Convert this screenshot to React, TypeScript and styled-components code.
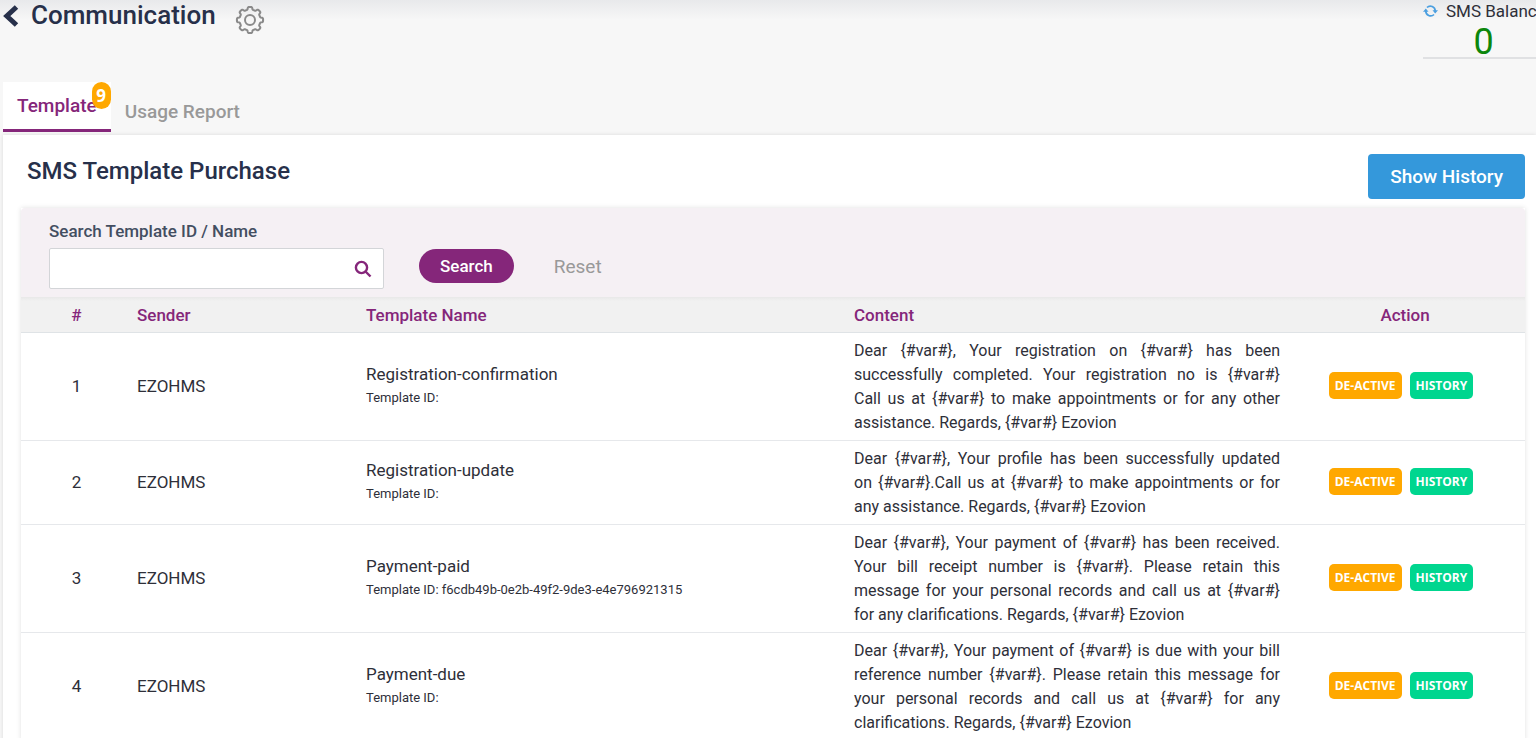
import React from "react";
import styled, { createGlobalStyle } from "styled-components";

const Global = createGlobalStyle`
  *, *::before, *::after { box-sizing: border-box; }
  body {
    margin: 0;
    background: #f7f7f7;
    color: #2e2f39;
    font-family: Roboto, "Liberation Sans", sans-serif;
    font-size: 17px;
    line-height: 24px;
  }
  button, input { font-family: inherit; }
  button { cursor: pointer; border: 0; }
  svg { flex: none; }
`;

const Page = styled.div`
  min-height: 100vh;
  overflow: hidden;
  background: linear-gradient(#e8e9eb, #f7f7f7 20px);
`;

const Header = styled.header`
  display: flex;
  align-items: flex-start;
  justify-content: space-between;
  height: 82px;
`;

const Heading = styled.div`
  display: flex;
  align-items: flex-start;
`;

const BackLink = styled.a`
  display: flex;
  padding: 5px 12px 0 3px;
  color: #27304a;
`;

const PageTitle = styled.h1`
  margin: 0 19px 0 0;
  color: #27304a;
  font-size: 26px;
  font-weight: 500;
  line-height: 31px;
`;

const GearButton = styled.button`
  display: flex;
  margin-top: 5px;
  padding: 0;
  background: none;
  color: #8a8a8a;
`;

const Balance = styled.div`
  flex: none;
  width: 121px;
  height: 59px;
  margin-right: -8px;
  border-bottom: 2px solid #e0e1e3;
`;

const BalanceLabel = styled.div`
  display: flex;
  align-items: center;
  gap: 8px;
  height: 22px;
  white-space: nowrap;
`;

const BalanceValue = styled.div`
  color: #0c870c;
  font-size: 36px;
  line-height: 40px;
  text-align: center;
`;

const Tabs = styled.nav`
  display: flex;
  height: 53px;
  padding-left: 3px;
`;

const Tab = styled.a<{ $active?: boolean }>`
  position: relative;
  height: ${(p) => (p.$active ? 50 : 53)}px;
  padding: ${(p) => (p.$active ? "12px 14px 0" : "18px 14px 0")};
  border-bottom: ${(p) => (p.$active ? "3px solid #85267a" : "0")};
  background: ${(p) => (p.$active ? "#fff" : "transparent")};
  color: ${(p) => (p.$active ? "#85267a" : "#999")};
  font-size: 19px;
  font-weight: 500;
  text-decoration: none;
`;

const Badge = styled.span`
  position: absolute;
  top: 0;
  right: 0;
  width: 19px;
  border-radius: 10px;
  background: #ffa800;
  color: #fff;
  font: 700 17px/27px "Open Sans", sans-serif;
  text-align: center;
`;

const Content = styled.main`
  margin-left: 3px;
  padding: 19px 11px 0 18px;
  background: #fff;
  box-shadow: 0 0 4px rgba(0, 0, 0, 0.12);
`;

const TitleRow = styled.div`
  display: flex;
  justify-content: space-between;
  align-items: flex-start;
  height: 54px;
  padding-left: 6px;
`;

const SectionTitle = styled.h2`
  margin: 0;
  color: #27304a;
  font-size: 24px;
  font-weight: 500;
  line-height: 34px;
`;

const PrimaryButton = styled.button`
  height: 45px;
  padding: 0 22px;
  border-radius: 4px;
  background: #3498db;
  color: #fff;
  font-size: 19px;
  font-weight: 500;
`;

const Card = styled.section`
  box-shadow: 0 0 5px rgba(0, 0, 0, 0.12);
`;

const SearchForm = styled.form`
  display: flex;
  align-items: flex-start;
  padding: 11px 28px 8px;
  border-radius: 4px 4px 0 0;
  background: #f5f0f4;
`;

const Field = styled.div`
  width: 335px;
`;

const Label = styled.label`
  display: block;
  height: 29px;
  color: #434e61;
  font-weight: 500;
`;

const InputBox = styled.div`
  display: flex;
  align-items: center;
  height: 41px;
  padding-right: 11px;
  border: 1px solid #d3d5d8;
  border-radius: 2px;
  background: #fff;
  color: #85267a;
`;

const Input = styled.input`
  flex: 1;
  min-width: 0;
  height: 100%;
  padding: 0 12px;
  border: 0;
  outline: 0;
  background: transparent;
  font-size: 17px;
`;

const SearchButton = styled.button`
  height: 34px;
  margin: 30px 18px 0 35px;
  padding: 0 21px;
  border-radius: 17px;
  background: #85267a;
  color: #fff;
  font-size: 17px;
  font-weight: 500;
`;

const ResetButton = styled.button`
  height: 34px;
  margin-top: 30px;
  padding: 0 22px;
  background: none;
  color: #999;
  font-size: 19px;
`;

const Table = styled.table`
  width: 100%;
  table-layout: fixed;
  border-collapse: collapse;
`;

const Col = styled.col<{ $width?: number }>`
  width: ${(p) => (p.$width ? `${p.$width}px` : "auto")};
`;

const Th = styled.th<{ $center?: boolean }>`
  height: 35px;
  padding: 2px 5px 0;
  border-bottom: 1px solid #dfe3e6;
  background: linear-gradient(#e8e8e8, #f1f1f1 4px);
  color: #85267a;
  font-weight: 500;
  text-align: ${(p) => (p.$center ? "center" : "left")};
`;

const Td = styled.td`
  padding: 5px 5px 6px;
  border-bottom: 1px solid #e6e8eb;
`;

const NumberTd = styled(Td)`
  text-align: center;
`;

const MessageTd = styled(Td)`
  padding: 6px 5px 5px;
  font-size: 16px;
  text-align: justify;
`;

const TemplateId = styled.div`
  font-size: 13px;
`;

const Tag = styled.button<{ $color: string }>`
  height: 27px;
  margin-right: 8px;
  padding: 0 6px;
  border-radius: 5px;
  background: ${(p) => p.$color};
  color: #fff;
  font: 700 12px/27px "Open Sans", sans-serif;
`;

const Actions = styled.div`
  display: flex;
  justify-content: center;
`;

const rows = [
  {
    name: "Registration-confirmation",
    id: "",
    content:
      "Dear {#var#}, Your registration on {#var#} has been successfully completed. Your registration no is {#var#} Call\u00a0us at {#var#} to make appointments or for any other assistance. Regards, {#var#} Ezovion",
  },
  {
    name: "Registration-update",
    id: "",
    content:
      "Dear {#var#}, Your profile has been successfully updated on\u00a0{#var#}.Call us at {#var#} to make appointments or for any assistance. Regards, {#var#} Ezovion",
  },
  {
    name: "Payment-paid",
    id: "f6cdb49b-0e2b-49f2-9de3-e4e796921315",
    content:
      "Dear {#var#}, Your payment of {#var#} has been received. Your bill receipt number is {#var#}. Please retain this message for your personal records and call us at {#var#} for any clarifications. Regards, {#var#} Ezovion",
  },
  {
    name: "Payment-due",
    id: "",
    content:
      "Dear {#var#}, Your payment of {#var#} is due with your bill reference number {#var#}. Please retain this message for your personal records and call us at {#var#} for any clarifications. Regards, {#var#} Ezovion",
  },
];

const BackIcon = () => (
  <svg width="16" height="22" viewBox="0 0 16 22" fill="none" stroke="currentColor" strokeWidth="5">
    <path d="M13.500 2 3.800 11l9.700 9" />
  </svg>
);

function gearPath() {
  const steps = 240;
  const points: string[] = [];
  for (let i = 0; i < steps; i++) {
    const a = (i / steps) * Math.PI * 2;
    const wave = Math.tanh(3 * Math.cos(8 * a)) / Math.tanh(3);
    const r = 11.8 + 1.3 * wave;
    points.push(`${(15 + r * Math.sin(a)).toFixed(2)} ${(15 - r * Math.cos(a)).toFixed(2)}`);
  }
  return `M${points.join("L")}Z`;
}

const GearIcon = () => (
  <svg width="30" height="30" viewBox="0 0 30 30" fill="none" stroke="currentColor" strokeWidth="2" strokeLinejoin="round">
    <path d={gearPath()} />
    <circle cx="15" cy="15" r="5" />
  </svg>
);

const RefreshIcon = () => (
  <svg width="15" height="14" viewBox="0 0 15 14" fill="none" stroke="#4b9fe0" strokeWidth="1.700">
    <path d="M4 3.500A4.800 4.800 0 0 1 12.200 7M11 10.500A4.800 4.800 0 0 1 2.800 7" />
    <path d="M9.500 6.200H15l-2.800 3.400zM0 7.800h5.500L2.800 4.400z" fill="#4b9fe0" stroke="none" />
  </svg>
);

const SearchIcon = () => (
  <svg width="18" height="18" viewBox="0 0 18 18" fill="none" stroke="currentColor" strokeWidth="2.400">
    <circle cx="7.500" cy="7.500" r="5.600" />
    <path d="m11.500 11.500 5 5" />
  </svg>
);

export default function App() {
  return (
    <>
      <Global />
      <Page>
        <Header>
          <Heading>
            <BackLink href="#" aria-label="Back">
              <BackIcon />
            </BackLink>
            <PageTitle>Communication</PageTitle>
            <GearButton aria-label="Settings">
              <GearIcon />
            </GearButton>
          </Heading>
          <Balance>
            <BalanceLabel>
              <RefreshIcon />
              SMS Balance
            </BalanceLabel>
            <BalanceValue>0</BalanceValue>
          </Balance>
        </Header>
        <Tabs>
          <Tab href="#template" $active>
            Template<Badge>9</Badge>
          </Tab>
          <Tab href="#usage">Usage Report</Tab>
        </Tabs>
        <Content>
          <TitleRow>
            <SectionTitle>SMS Template Purchase</SectionTitle>
            <PrimaryButton>Show History</PrimaryButton>
          </TitleRow>
          <Card>
            <SearchForm onSubmit={(e) => e.preventDefault()}>
              <Field>
                <Label htmlFor="template-search">Search Template ID / Name</Label>
                <InputBox>
                  <Input id="template-search" type="text" />
                  <SearchIcon />
                </InputBox>
              </Field>
              <SearchButton type="submit">Search</SearchButton>
              <ResetButton type="reset">Reset</ResetButton>
            </SearchForm>
            <Table>
              <colgroup>
                <Col $width={111} />
                <Col $width={229} />
                <Col />
                <Col $width={436} />
                <Col $width={240} />
              </colgroup>
              <thead>
                <tr>
                  <Th $center>#</Th>
                  <Th>Sender</Th>
                  <Th>Template Name</Th>
                  <Th>Content</Th>
                  <Th $center>Action</Th>
                </tr>
              </thead>
              <tbody>
                {rows.map((row, i) => (
                  <tr key={row.name}>
                    <NumberTd>{i + 1}</NumberTd>
                    <Td>EZOHMS</Td>
                    <Td>
                      {row.name}
                      <TemplateId>Template ID: {row.id}</TemplateId>
                    </Td>
                    <MessageTd>{row.content}</MessageTd>
                    <Td>
                      <Actions>
                        <Tag $color="#ffa800">DE-ACTIVE</Tag>
                        <Tag $color="#00d68f">HISTORY</Tag>
                      </Actions>
                    </Td>
                  </tr>
                ))}
              </tbody>
            </Table>
          </Card>
        </Content>
      </Page>
    </>
  );
}
